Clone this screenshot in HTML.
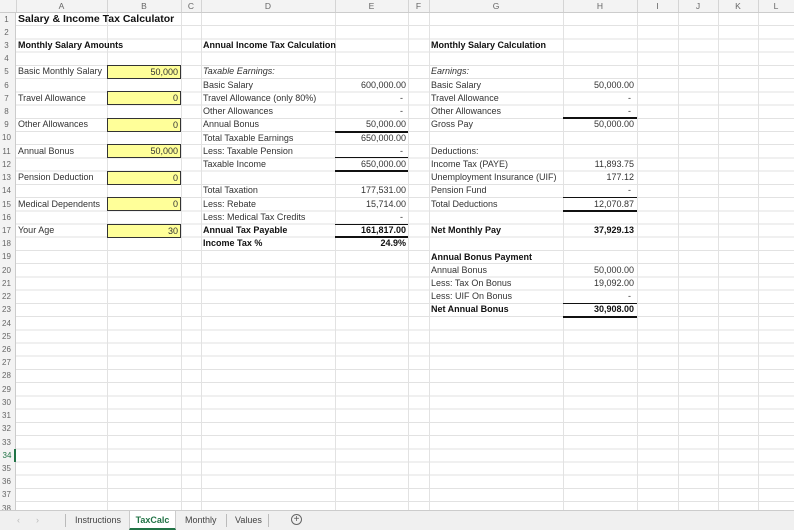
<!DOCTYPE html>
<html><head><meta charset="utf-8"><style>
*{margin:0;padding:0;box-sizing:border-box}
body{width:794px;height:530px;overflow:hidden;background:#fff;font-family:"Liberation Sans",sans-serif;font-size:9px;color:#333;position:relative}
#grid{position:absolute;left:0;top:12.5px;width:794px;height:498px;background:repeating-linear-gradient(to bottom,transparent 0,transparent 12.22px,#e2e2e2 12.22px,#e2e2e2 13.22px)}
.v{position:absolute;top:0;width:1px;height:510px;background:#e2e2e2}
#hdr{position:absolute;left:0;top:0;width:794px;height:12.5px;background:#f3f3f3;border-bottom:1px solid #ccc}
#rn{position:absolute;left:0;top:12.5px;width:16px;height:498px;background:#f3f3f3;border-right:1px solid #ccc}
.h{position:absolute;top:0;height:12px;line-height:12px;text-align:center;color:#666;font-size:8.5px}
.hs{position:absolute;top:0;width:1px;height:12px;background:#d4d4d4}
.n{position:absolute;left:0;width:13px;text-align:center;color:#666;font-size:8px;height:13.22px;line-height:13.22px}
.t{position:absolute;height:13.22px;line-height:13.22px;white-space:nowrap}
.r{text-align:right}
.b{font-weight:bold;color:#111}
.y{position:absolute;left:107px;width:74px;height:14px;background:#ffff99;border:1px solid #333;text-align:right;padding-right:2px;line-height:12px}
.ln{position:absolute;height:1px;background:#111}
.lk{position:absolute;height:2px;background:#111}
#tabs{position:absolute;left:0;top:510px;width:794px;height:20px;background:#f0f0f0;border-top:1px solid #ccc}
.tab{position:absolute;top:0;height:19px;line-height:18px;font-size:9px;color:#444}
</style></head><body>
<div id="grid"></div>
<div class="v" style="left:107px"></div><div class="v" style="left:181px"></div><div class="v" style="left:201px"></div><div class="v" style="left:335px"></div><div class="v" style="left:408px"></div><div class="v" style="left:429px"></div><div class="v" style="left:563px"></div><div class="v" style="left:637px"></div><div class="v" style="left:678px"></div><div class="v" style="left:718px"></div><div class="v" style="left:758px"></div>
<div id="hdr">
<div class="h" style="left:16px;width:91px">A</div><div class="h" style="left:107px;width:74px">B</div><div class="h" style="left:181px;width:20px">C</div><div class="h" style="left:201px;width:134px">D</div><div class="h" style="left:335px;width:73px">E</div><div class="h" style="left:408px;width:21px">F</div><div class="h" style="left:429px;width:134px">G</div><div class="h" style="left:563px;width:74px">H</div><div class="h" style="left:637px;width:41px">I</div><div class="h" style="left:678px;width:40px">J</div><div class="h" style="left:718px;width:40px">K</div><div class="h" style="left:758px;width:36px">L</div>
<div class="hs" style="left:16px"></div><div class="hs" style="left:107px"></div><div class="hs" style="left:181px"></div><div class="hs" style="left:201px"></div><div class="hs" style="left:335px"></div><div class="hs" style="left:408px"></div><div class="hs" style="left:429px"></div><div class="hs" style="left:563px"></div><div class="hs" style="left:637px"></div><div class="hs" style="left:678px"></div><div class="hs" style="left:718px"></div><div class="hs" style="left:758px"></div>
</div>
<div id="rn">
<div class="n" style="top:0">1</div><div class="n" style="top:13.22px">2</div><div class="n" style="top:26.44px">3</div><div class="n" style="top:39.66px">4</div><div class="n" style="top:52.88px">5</div><div class="n" style="top:66.1px">6</div><div class="n" style="top:79.32px">7</div><div class="n" style="top:92.54px">8</div><div class="n" style="top:105.76px">9</div><div class="n" style="top:118.98px">10</div><div class="n" style="top:132.2px">11</div><div class="n" style="top:145.42px">12</div><div class="n" style="top:158.64px">13</div><div class="n" style="top:171.86px">14</div><div class="n" style="top:185.08px">15</div><div class="n" style="top:198.3px">16</div><div class="n" style="top:211.52px">17</div><div class="n" style="top:224.74px">18</div><div class="n" style="top:237.96px">19</div><div class="n" style="top:251.18px">20</div><div class="n" style="top:264.4px">21</div><div class="n" style="top:277.62px">22</div><div class="n" style="top:290.84px">23</div><div class="n" style="top:304.06px">24</div><div class="n" style="top:317.28px">25</div><div class="n" style="top:330.5px">26</div><div class="n" style="top:343.72px">27</div><div class="n" style="top:356.94px">28</div><div class="n" style="top:370.16px">29</div><div class="n" style="top:383.38px">30</div><div class="n" style="top:396.6px">31</div><div class="n" style="top:409.82px">32</div><div class="n" style="top:423.04px">33</div><div class="n" style="top:436.26px;color:#217346;border-right:2px solid #217346;width:16px">34</div><div class="n" style="top:449.48px">35</div><div class="n" style="top:462.7px">36</div><div class="n" style="top:475.92px">37</div><div class="n" style="top:489.14px">38</div>
</div>

<div class="t b" style="left:18px;top:12.5px;font-size:10.5px">Salary &amp; Income Tax Calculator</div>
<div class="t b" style="left:18px;top:38.9px">Monthly Salary Amounts</div>
<div class="t b" style="left:203px;top:38.9px">Annual Income Tax Calculation</div>
<div class="t b" style="left:431px;top:38.9px">Monthly Salary Calculation</div>

<div class="t" style="left:18px;top:65.4px">Basic Monthly Salary</div>
<div class="t" style="left:18px;top:91.8px">Travel Allowance</div>
<div class="t" style="left:18px;top:118.3px">Other Allowances</div>
<div class="t" style="left:18px;top:144.7px">Annual Bonus</div>
<div class="t" style="left:18px;top:171.1px">Pension Deduction</div>
<div class="t" style="left:18px;top:197.6px">Medical Dependents</div>
<div class="t" style="left:18px;top:224px">Your Age</div>
<div class="y" style="top:65px">50,000</div>
<div class="y" style="top:91.4px">0</div>
<div class="y" style="top:117.9px">0</div>
<div class="y" style="top:144.3px">50,000</div>
<div class="y" style="top:170.7px">0</div>
<div class="y" style="top:197.2px">0</div>
<div class="y" style="top:223.6px">30</div>

<div class="t" style="left:203px;top:65.4px;font-style:italic">Taxable Earnings:</div>
<div class="t" style="left:203px;top:78.6px">Basic Salary</div>
<div class="t" style="left:203px;top:91.8px">Travel Allowance (only 80%)</div>
<div class="t" style="left:203px;top:105px">Other Allowances</div>
<div class="t" style="left:203px;top:118.3px">Annual Bonus</div>
<div class="t" style="left:203px;top:131.5px">Total Taxable Earnings</div>
<div class="t" style="left:203px;top:144.7px">Less: Taxable Pension</div>
<div class="t" style="left:203px;top:157.9px">Taxable Income</div>
<div class="t" style="left:203px;top:184.4px">Total Taxation</div>
<div class="t" style="left:203px;top:197.6px">Less: Rebate</div>
<div class="t" style="left:203px;top:210.8px">Less: Medical Tax Credits</div>
<div class="t b" style="left:203px;top:224px">Annual Tax Payable</div>
<div class="t b" style="left:203px;top:237.2px">Income Tax %</div>

<div class="t r" style="left:335px;width:71px;top:78.6px">600,000.00</div>
<div class="t r" style="left:335px;width:68px;top:91.8px">-</div>
<div class="t r" style="left:335px;width:68px;top:105px">-</div>
<div class="t r" style="left:335px;width:71px;top:118.3px">50,000.00</div>
<div class="t r" style="left:335px;width:71px;top:131.5px">650,000.00</div>
<div class="t r" style="left:335px;width:68px;top:144.7px">-</div>
<div class="t r" style="left:335px;width:71px;top:157.9px">650,000.00</div>
<div class="t r" style="left:335px;width:71px;top:184.4px">177,531.00</div>
<div class="t r" style="left:335px;width:71px;top:197.6px">15,714.00</div>
<div class="t r" style="left:335px;width:68px;top:210.8px">-</div>
<div class="t r b" style="left:335px;width:71px;top:224px">161,817.00</div>
<div class="t r b" style="left:335px;width:71px;top:237.2px">24.9%</div>
<div class="lk" style="left:335px;width:73px;top:130.5px"></div>
<div class="ln" style="left:335px;width:73px;top:157.4px"></div>
<div class="lk" style="left:335px;width:73px;top:170.1px"></div>
<div class="ln" style="left:335px;width:73px;top:223.5px"></div>
<div class="lk" style="left:335px;width:73px;top:236.2px"></div>

<div class="t" style="left:431px;top:65.4px;font-style:italic">Earnings:</div>
<div class="t" style="left:431px;top:78.6px">Basic Salary</div>
<div class="t" style="left:431px;top:91.8px">Travel Allowance</div>
<div class="t" style="left:431px;top:105px">Other Allowances</div>
<div class="t" style="left:431px;top:118.3px">Gross Pay</div>
<div class="t" style="left:431px;top:144.7px">Deductions:</div>
<div class="t" style="left:431px;top:157.9px">Income Tax (PAYE)</div>
<div class="t" style="left:431px;top:171.1px">Unemployment Insurance (UIF)</div>
<div class="t" style="left:431px;top:184.4px">Pension Fund</div>
<div class="t" style="left:431px;top:197.6px">Total Deductions</div>
<div class="t b" style="left:431px;top:224px">Net Monthly Pay</div>
<div class="t b" style="left:431px;top:250.5px">Annual Bonus Payment</div>
<div class="t" style="left:431px;top:263.7px">Annual Bonus</div>
<div class="t" style="left:431px;top:276.9px">Less: Tax On Bonus</div>
<div class="t" style="left:431px;top:290.1px">Less: UIF On Bonus</div>
<div class="t b" style="left:431px;top:303.3px">Net Annual Bonus</div>

<div class="t r" style="left:563px;width:71px;top:78.6px">50,000.00</div>
<div class="t r" style="left:563px;width:68px;top:91.8px">-</div>
<div class="t r" style="left:563px;width:68px;top:105px">-</div>
<div class="t r" style="left:563px;width:71px;top:118.3px">50,000.00</div>
<div class="t r" style="left:563px;width:71px;top:157.9px">11,893.75</div>
<div class="t r" style="left:563px;width:71px;top:171.1px">177.12</div>
<div class="t r" style="left:563px;width:68px;top:184.4px">-</div>
<div class="t r" style="left:563px;width:71px;top:197.6px">12,070.87</div>
<div class="t r b" style="left:563px;width:71px;top:224px">37,929.13</div>
<div class="t r" style="left:563px;width:71px;top:263.7px">50,000.00</div>
<div class="t r" style="left:563px;width:71px;top:276.9px">19,092.00</div>
<div class="t r" style="left:563px;width:68px;top:290.1px">-</div>
<div class="t r b" style="left:563px;width:71px;top:303.3px">30,908.00</div>
<div class="lk" style="left:563px;width:74px;top:117.3px"></div>
<div class="ln" style="left:563px;width:74px;top:197.1px"></div>
<div class="lk" style="left:563px;width:74px;top:209.8px"></div>
<div class="ln" style="left:563px;width:74px;top:302.8px"></div>
<div class="lk" style="left:563px;width:74px;top:315.6px"></div>

<div id="tabs">
<div class="tab" style="left:17px;color:#bbb">&#8249;</div>
<div class="tab" style="left:36px;color:#bbb">&#8250;</div>
<div style="position:absolute;left:65px;top:3px;width:1px;height:13px;background:#bbb"></div>
<div class="tab" style="left:75px">Instructions</div>
<div class="tab" style="left:129px;width:47px;background:#fff;color:#217346;font-weight:bold;text-align:center;border-bottom:2px solid #217346;border-left:1px solid #ccc;border-right:1px solid #ccc">TaxCalc</div>
<div class="tab" style="left:185px">Monthly</div>
<div style="position:absolute;left:226px;top:3px;width:1px;height:13px;background:#bbb"></div>
<div class="tab" style="left:235px">Values</div>
<div style="position:absolute;left:268px;top:3px;width:1px;height:13px;background:#bbb"></div>
<div style="position:absolute;left:291px;top:3px;width:11px;height:11px;border:1px solid #666;border-radius:50%;text-align:center;line-height:9px;font-size:10px;color:#555">+</div>
</div>
</body></html>
